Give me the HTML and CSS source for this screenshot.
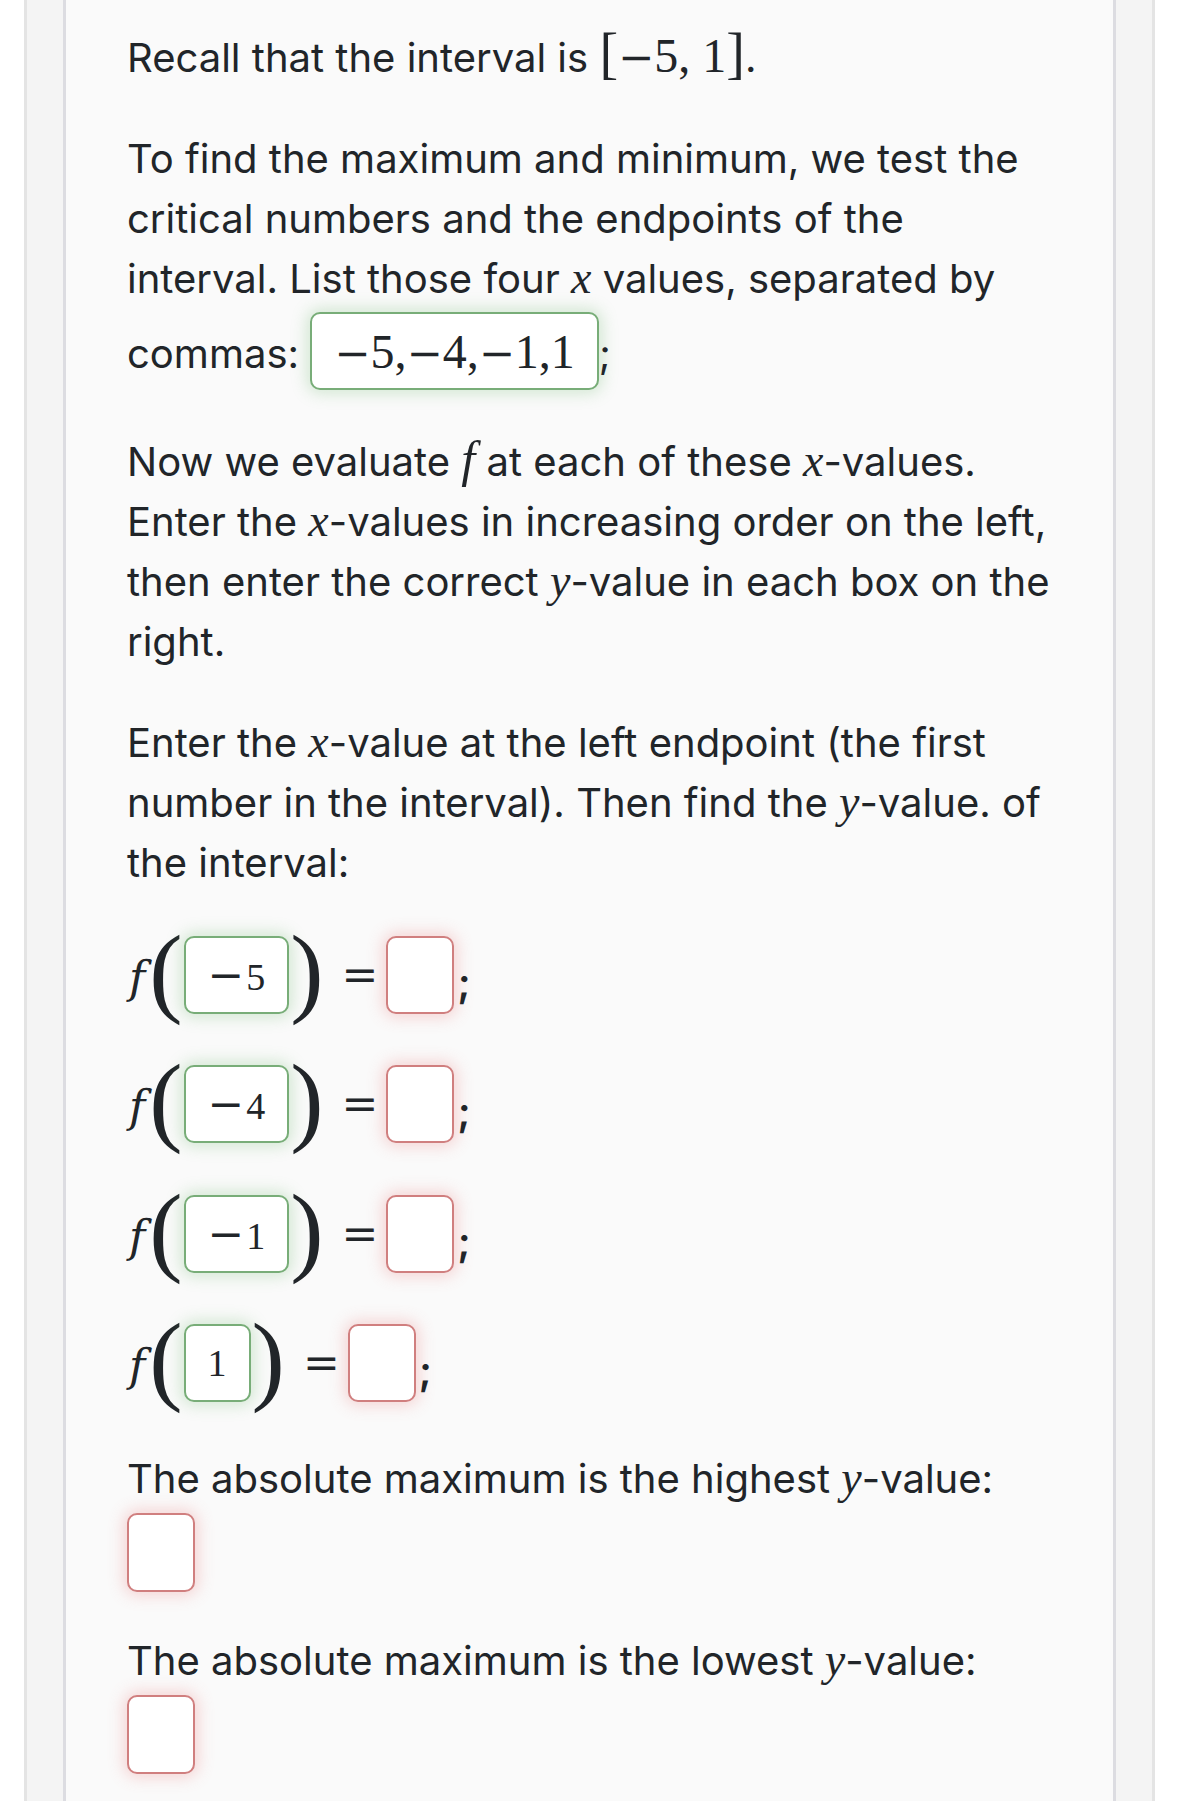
FILE: index.html
```html
<!DOCTYPE html>
<html>
<head>
<meta charset="utf-8">
<link rel="stylesheet" href="styles.css">
</head>
<body>
<div class="outer">
  <div class="inner">
    <p>Recall that the interval is <span class="m"><span class="br">[</span><span class="op">−</span>5, 1<span class="br">]</span></span>.</p>
    <p>To find the maximum and minimum, we test the<br>critical numbers and the endpoints of the<br>interval. List those four <i class="v">x</i> values, separated by<br>commas: <span class="ans ok big"><span class="op">−</span>5,<span class="op">−</span>4,<span class="op">−</span>1,1</span>;</p>
    <p>Now we evaluate <i class="v vf">f</i> at each of these <i class="v">x</i>-values.<br>Enter the <i class="v">x</i>-values in increasing order on the left,<br>then enter the correct <i class="v">y</i>-value in each box on the<br>right.</p>
    <p class="lead">Enter the <i class="v">x</i>-value at the left endpoint (the first<br>number in the interval). Then find the <i class="v">y</i>-value. of<br>the interval:</p>
    <div class="rows">
      <div class="frow"><i class="fv">f</i><span class="paren">(</span><span class="ans ok sm"><span class="op">−</span>5</span><span class="paren">)</span><span class="eq">=</span><span class="ans bad cell"></span><span class="semi">;</span></div>
      <div class="frow"><i class="fv">f</i><span class="paren">(</span><span class="ans ok sm"><span class="op">−</span>4</span><span class="paren">)</span><span class="eq">=</span><span class="ans bad cell"></span><span class="semi">;</span></div>
      <div class="frow"><i class="fv">f</i><span class="paren">(</span><span class="ans ok sm"><span class="op">−</span>1</span><span class="paren">)</span><span class="eq">=</span><span class="ans bad cell"></span><span class="semi">;</span></div>
      <div class="frow"><i class="fv">f</i><span class="paren">(</span><span class="ans ok sm">1</span><span class="paren">)</span><span class="eq">=</span><span class="ans bad cell"></span><span class="semi">;</span></div>
    </div>
    <p class="q">The absolute maximum is the highest <i class="v">y</i>-value:</p>
    <div class="ans bad solo"></div>
    <p class="q">The absolute maximum is the lowest <i class="v">y</i>-value:</p>
    <div class="ans bad solo"></div>
  </div>
</div>
</body>
</html>
```

FILE: styles.css
```css
body {
  margin: 0;
  background: #ffffff;
  font-family: Inter, "Noto Sans", sans-serif;
  color: #212529;
}

.outer {
  margin-left: 24px;
  width: 1131px;
  box-sizing: border-box;
  border-left: 3px solid #e4e4e4;
  border-right: 3px solid #e4e4e4;
  background: #f4f4f4;
  padding: 0 36px;
  min-height: 1801px;
}

.inner {
  box-sizing: border-box;
  min-height: 1801px;
  border-left: 3px solid #dcdce1;
  border-right: 3px solid #dcdce1;
  background: #fafafa;
  padding: 24.5px 61px 40px;
}

p {
  margin: 0 0 41.4px;
  font-size: 40px;
  line-height: 60px;
}

.m {
  font-family: "Liberation Serif", serif;
  font-size: 48px;
  line-height: 1;
}

.br {
  font-size: 56px;
  line-height: 1;
}

.op {
  font-family: "DejaVu Serif", serif;
  font-size: 0.9em;
}

.v {
  font-family: "Liberation Serif", serif;
  font-style: italic;
  font-size: 46px;
  line-height: 1;
}

.vf {
  font-size: 50px;
}

.ans {
  display: inline-block;
  box-sizing: border-box;
  background: #ffffff;
  border: 2px solid;
  border-radius: 10px;
  vertical-align: baseline;
}

.ok {
  border-color: #78ad78;
  box-shadow: 0 0 16px 3px rgba(120, 190, 120, 0.32);
}

.bad {
  border-color: #d07f7f;
  box-shadow: 0 0 16px 3px rgba(235, 120, 120, 0.3);
}

.big {
  font-family: "Liberation Serif", serif;
  font-size: 48px;
  line-height: 48px;
  height: 78px;
  padding: 13.8px 22px 0;
  margin-top: 3.4px;
}

.lead {
  margin-bottom: 37px;
}

.rows {
  display: flex;
  flex-direction: column;
  gap: 39.3px;
  margin-bottom: 41.2px;
}

.frow {
  display: flex;
  align-items: center;
  height: 90px;
}

.fv {
  font-family: "DejaVu Serif", serif;
  font-style: italic;
  font-size: 44px;
  line-height: 1;
  margin-left: 2px;
  margin-right: 4px;
  margin-top: 6px;
}

.paren {
  font-family: "Liberation Serif", serif;
  font-size: 100px;
  line-height: 90px;
  margin-top: -8px;
}

.sm {
  font-family: "Liberation Serif", serif;
  font-size: 38px;
  line-height: 74px;
  height: 78px;
  padding: 0 22px;
  margin: 0 1px;
}

.sm .op {
  font-size: 1.15em;
  margin-right: 2px;
}

.eq {
  font-family: "DejaVu Serif", serif;
  font-size: 44px;
  line-height: 1;
  margin: 0 8px 0 18px;
}

.cell {
  width: 68px;
  height: 78px;
}

.semi {
  font-size: 40px;
  font-weight: 600;
  line-height: 40px;
  margin-top: 16px;
  margin-left: 3px;
}

.q {
  margin-bottom: 0;
}

.solo {
  display: block;
  width: 68px;
  height: 79px;
  margin-top: 4px;
  margin-bottom: 38.5px;
}
```
